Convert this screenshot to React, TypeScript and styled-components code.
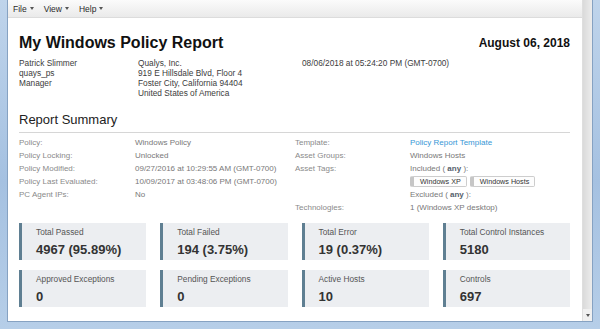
import { Fragment } from 'react';
import styled, { createGlobalStyle } from 'styled-components';

const GlobalStyle = createGlobalStyle`
  html, body {
    margin: 0;
    padding: 0;
    background: #fff;
  }
  body {
    font-family: "Liberation Sans", Arial, sans-serif;
  }
  * {
    box-sizing: border-box;
  }
`;

const Window = styled.div`
  width: 600px;
  height: 329px;
  padding: 0 7px 7px;
  background: linear-gradient(to bottom, #bfd4eb 0%, #a5c1e1 55%, #b6cee8 100%);
  overflow: hidden;
`;

const Client = styled.div`
  display: flex;
  height: 100%;
  border: 1px solid #86a2c2;
  border-top: none;
  background: #fff;
`;

const Main = styled.div`
  flex: 1;
  min-width: 0;
  display: flex;
  flex-direction: column;
`;

const MenuBar = styled.div`
  height: 18px;
  display: flex;
  align-items: center;
  background: linear-gradient(to bottom, #fbfbfb, #eaeaea);
  border-bottom: 1px solid #dcdcdc;
`;

const MenuItem = styled.span`
  display: flex;
  align-items: center;
  gap: 3px;
  padding: 0 5px;
  font-size: 8.5px;
  color: #2a2a2a;
`;

const Caret = styled.span`
  width: 0;
  height: 0;
  border-left: 2.5px solid transparent;
  border-right: 2.5px solid transparent;
  border-top: 3px solid #555;
`;

const Page = styled.div`
  flex: 1;
  padding: 15px 12px 0 11px;
`;

const Header = styled.div`
  display: flex;
  justify-content: space-between;
  align-items: center;
  height: 19px;
`;

const Title = styled.h1`
  margin: 0;
  font-size: 16px;
  font-weight: bold;
  line-height: 19px;
  color: #111;
`;

const ReportDate = styled.div`
  font-size: 12px;
  font-weight: bold;
  color: #111;
`;

const InfoGrid = styled.div`
  display: grid;
  grid-template-columns: 119px 164px 1fr;
  margin-top: 6px;
  font-size: 8.3px;
  line-height: 10px;
  color: #3c3c3c;
`;

const SectionTitle = styled.h2`
  margin: 14px 0 0;
  padding-bottom: 4px;
  border-bottom: 1px solid #d6d6d6;
  font-size: 13px;
  font-weight: normal;
  line-height: 16px;
  color: #222;
`;

const Summary = styled.div`
  display: flex;
  margin-top: 3px;
  font-size: 8px;
  line-height: 13px;
`;

const SummaryBlock = styled.div<{ $labelWidth: number; $width?: number }>`
  display: grid;
  grid-template-columns: ${({ $labelWidth }) => $labelWidth}px 1fr;
  align-content: start;
  ${({ $width }) => ($width ? `width: ${$width}px;` : 'flex: 1;')}
`;

const Label = styled.div`
  color: #8a8a8a;
  white-space: nowrap;
`;

const Value = styled.div`
  color: #787878;
  white-space: nowrap;
`;

const Link = styled.span`
  color: #3797d6;
`;

const Any = styled.b`
  color: #56616c;
`;

const TagRow = styled.div`
  display: flex;
  align-items: center;
  gap: 3px;
  height: 13px;
`;

const Tag = styled.span`
  height: 11px;
  padding: 0 5px 0 6px;
  border: 1px solid #cdcdcd;
  border-left: 4px solid #c6c6c6;
  border-radius: 2px;
  background: #fdfdfd;
  font-size: 7.2px;
  line-height: 9px;
  color: #333;
`;

const Cards = styled.div`
  display: grid;
  grid-template-columns: repeat(4, 1fr);
  gap: 10px 14px;
  margin-top: 9px;
`;

const Card = styled.div`
  height: 37px;
  padding: 4px 0 0 14px;
  background: #eceef1;
  border-left: 3px solid #5f7f92;
`;

const CardLabel = styled.div`
  font-size: 8.3px;
  line-height: 10px;
  color: #555;
`;

const CardValue = styled.div`
  margin-top: 5px;
  font-size: 13px;
  font-weight: bold;
  line-height: 16px;
  color: #333;
`;

const ScrollBar = styled.div`
  width: 10px;
  display: flex;
  flex-direction: column;
  background: #f0f0f0;
  border-left: 1px solid #dedede;
`;

const Thumb = styled.div`
  flex: 1;
  background: linear-gradient(to right, #dadada, #ececec);
`;

const ScrollArrow = styled.div`
  height: 12px;
  display: flex;
  align-items: center;
  justify-content: center;
`;

const leftRows = [
  ['Policy:', 'Windows Policy'],
  ['Policy Locking:', 'Unlocked'],
  ['Policy Modified:', '09/27/2016 at 10:29:55 AM (GMT-0700)'],
  ['Policy Last Evaluated:', '10/09/2017 at 03:48:06 PM (GMT-0700)'],
  ['PC Agent IPs:', 'No'],
];

const stats = [
  ['Total Passed', '4967 (95.89%)'],
  ['Total Failed', '194 (3.75%)'],
  ['Total Error', '19 (0.37%)'],
  ['Total Control Instances', '5180'],
  ['Approved Exceptions', '0'],
  ['Pending Exceptions', '0'],
  ['Active Hosts', '10'],
  ['Controls', '697'],
];

export default function App() {
  return (
    <>
      <GlobalStyle />
      <Window>
        <Client>
          <Main>
            <MenuBar>
              {['File', 'View', 'Help'].map((m) => (
                <MenuItem key={m}>
                  {m}
                  <Caret />
                </MenuItem>
              ))}
            </MenuBar>
            <Page>
              <Header>
                <Title>My Windows Policy Report</Title>
                <ReportDate>August 06, 2018</ReportDate>
              </Header>
              <InfoGrid>
                <div>
                  <div>Patrick Slimmer</div>
                  <div>quays_ps</div>
                  <div>Manager</div>
                </div>
                <div>
                  <div>Qualys, Inc.</div>
                  <div>919 E Hillsdale Blvd, Floor 4</div>
                  <div>Foster City, California 94404</div>
                  <div>United States of America</div>
                </div>
                <div>
                  <div>08/06/2018 at 05:24:20 PM (GMT-0700)</div>
                </div>
              </InfoGrid>
              <SectionTitle>Report Summary</SectionTitle>
              <Summary>
                <SummaryBlock $labelWidth={116} $width={276}>
                  {leftRows.map(([l, v]) => (
                    <Fragment key={l}>
                      <Label>{l}</Label>
                      <Value>{v}</Value>
                    </Fragment>
                  ))}
                </SummaryBlock>
                <SummaryBlock $labelWidth={115}>
                  <Label>Template:</Label>
                  <Value>
                    <Link>Policy Report Template</Link>
                  </Value>
                  <Label>Asset Groups:</Label>
                  <Value>Windows Hosts</Value>
                  <Label>Asset Tags:</Label>
                  <Value>
                    <div>
                      Included ( <Any>any</Any> ):
                    </div>
                    <TagRow>
                      <Tag>Windows XP</Tag>
                      <Tag>Windows Hosts</Tag>
                    </TagRow>
                    <div>
                      Excluded ( <Any>any</Any> ):
                    </div>
                  </Value>
                  <Label>Technologies:</Label>
                  <Value>1 (Windows XP desktop)</Value>
                </SummaryBlock>
              </Summary>
              <Cards>
                {stats.map(([l, v]) => (
                  <Card key={l}>
                    <CardLabel>{l}</CardLabel>
                    <CardValue>{v}</CardValue>
                  </Card>
                ))}
              </Cards>
            </Page>
          </Main>
          <ScrollBar>
            <Thumb />
            <ScrollArrow>
              <Caret />
            </ScrollArrow>
          </ScrollBar>
        </Client>
      </Window>
    </>
  );
}
